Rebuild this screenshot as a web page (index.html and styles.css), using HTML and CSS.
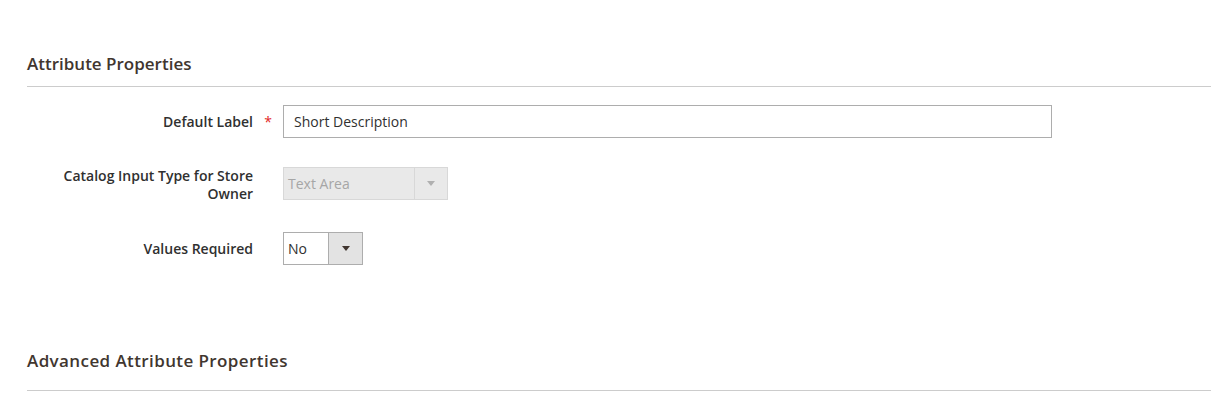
FILE: index.html
```html
<!DOCTYPE html>
<html>
<head>
<meta charset="utf-8">
<link rel="stylesheet" href="styles.css">
</head>
<body>
<div class="page">
  <div class="section">
    <div class="section-title first"><span>Attribute Properties</span></div>
    <div class="fields">
      <div class="field">
        <div class="label single">Default Label</div>
        <div class="req"><span>*</span></div>
        <div class="control"><div class="input">Short Description</div></div>
      </div>
      <div class="field">
        <div class="label multi">Catalog Input Type for Store Owner</div>
        <div class="req"></div>
        <div class="control">
          <div class="select disabled">
            <div class="select-value">Text Area</div>
            <div class="select-arrow"><span class="tri"></span></div>
          </div>
        </div>
      </div>
      <div class="field">
        <div class="label single">Values Required</div>
        <div class="req"></div>
        <div class="control">
          <div class="select small">
            <div class="select-value">No</div>
            <div class="select-arrow"><span class="tri"></span></div>
          </div>
        </div>
      </div>
    </div>
  </div>
  <div class="section">
    <div class="section-title second"><span>Advanced Attribute Properties</span></div>
  </div>
</div>
</body>
</html>
```

FILE: styles.css
```css
html, body {
  margin: 0;
  padding: 0;
  background: #ffffff;
}
body {
  font-family: "Open Sans", "Liberation Sans", sans-serif;
  color: #303030;
  width: 1211px;
  height: 409px;
  overflow: hidden;
}
.page {
  padding-left: 27px;
}
.section-title {
  border-bottom: 1px solid #cccccc;
  color: #41362f;
  font-size: 17px;
  font-weight: 600;
  line-height: 20px;
}
.section-title.first {
  padding-top: 54px;
  padding-bottom: 12px;
}
.section-title.second {
  margin-top: 86px;
  padding-bottom: 19px;
  letter-spacing: 0.4px;
}
.fields {
  display: flex;
  flex-direction: column;
  gap: 29px;
  padding-top: 18px;
}
.field {
  display: flex;
  align-items: flex-start;
}
.label {
  width: 200px;
  margin-left: 26px;
  text-align: right;
  font-size: 14px;
  font-weight: 600;
  color: #303030;
}
.label.single {
  line-height: 33px;
}
.label.multi {
  line-height: 18px;
}
.req {
  width: 30px;
  display: flex;
  justify-content: center;
  color: #e22626;
  font-size: 14px;
  line-height: 33px;
  height: 33px;
}
.control {
  display: flex;
}
.input {
  width: 747px;
  height: 31px;
  border: 1px solid #adadad;
  padding: 0 10px;
  font-size: 14px;
  line-height: 31px;
  color: #303030;
}
.select {
  display: flex;
  height: 31px;
  border: 1px solid #adadad;
  font-size: 14px;
  line-height: 31px;
}
.select-value {
  padding-left: 4px;
}
.select.disabled {
  width: 163px;
  background: #e9e9e9;
  border-color: #d8d8d8;
  color: #a6a6a6;
}
.select.disabled .select-value {
  width: 126px;
}
.select.disabled .select-arrow {
  border-left: 1px solid #d8d8d8;
}
.select.disabled .tri {
  border-top-color: #b0b0b0;
}
.select.small {
  width: 78px;
}
.select.small .select-value {
  width: 40px;
}
.select.small .select-arrow {
  background: #e3e3e3;
  border-left: 1px solid #adadad;
}
.select-arrow {
  flex: 1;
  display: flex;
  align-items: center;
  justify-content: center;
}
.tri {
  width: 0;
  height: 0;
  border-left: 4px solid transparent;
  border-right: 4px solid transparent;
  border-top: 5px solid #41362f;
}
```
